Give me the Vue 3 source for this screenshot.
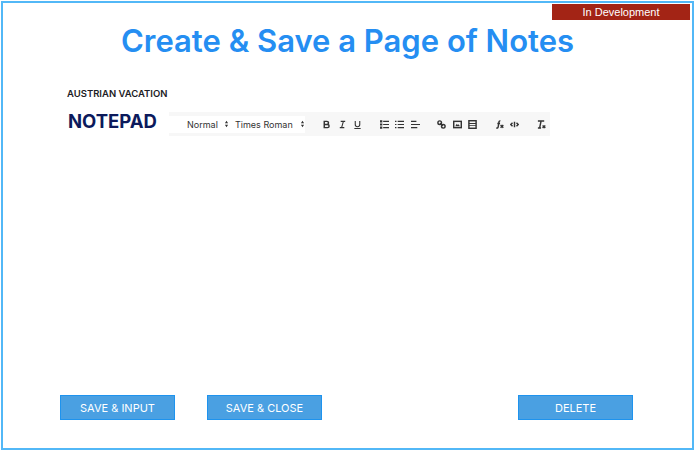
<template>
  <div class="page">
    <div class="badge">In Development</div>
    <h1 class="title">Create &amp; Save a Page of Notes</h1>

    <div class="subject">AUSTRIAN VACATION</div>

    <div class="editor-row">
      <div class="notepad">NOTEPAD</div>
      <div class="toolbar">
        <span class="picker picker-size">Normal<svg class="updown" viewBox="0 0 6 10"><path d="M3 1 5 4H1zM3 9 1 6h4z" /></svg></span>
        <span class="picker picker-font">Times Roman<svg class="updown" viewBox="0 0 6 10"><path d="M3 1 5 4H1zM3 9 1 6h4z" /></svg></span>

        <div class="group">
          <svg class="ico" viewBox="0 0 10 10"><path class="thick" d="M2.500 1.500h3a1.700 1.700 0 0 1 0 3.400h-3zM2.500 4.900h3.600a1.800 1.800 0 0 1 0 3.600H2.500z" /></svg>
          <svg class="ico" viewBox="0 0 10 10"><path d="M3 1.500h5M2 8.500h5M6 1.500 4 8.500" /></svg>
          <svg class="ico" viewBox="0 0 10 10"><path d="M2.500 1v4a2.500 2.500 0 0 0 5 0V1M1.500 9.500h7" /></svg>
        </div>

        <div class="group">
          <svg class="ico" viewBox="0 0 10 10"><path d="M3.500 1.500h6.500M3.500 5h6.500M3.500 8.500h6.500M0 1h2v1.200H0M0 4.400h2v1.200H0M0 7.900h2v1.200H0" /></svg>
          <svg class="ico" viewBox="0 0 10 10"><path d="M3 1.500h7M3 5h7M3 8.500h7M0 1.500h1.600M0 5h1.600M0 8.500h1.600" /></svg>
          <svg class="ico" viewBox="0 0 10 10"><path d="M0 1.500h6M0 5h10M0 8.500h7" /></svg>
        </div>

        <div class="group">
          <svg class="ico" viewBox="0 0 10 10"><circle class="thick" cx="3" cy="3" r="2" /><circle class="thick" cx="7" cy="7" r="2" /><path class="thick" d="M3.500 3.500l3 3" /></svg>
          <svg class="ico" viewBox="0 0 10 10"><rect class="thick" x="0.800" y="1.500" width="8.400" height="7" /><path class="fill" d="M2.500 7 4.200 4.200l1.100 1.400 1-.9L7.600 7z" /></svg>
          <svg class="ico" viewBox="0 0 10 10"><rect class="thick" x="1" y="0.800" width="8" height="8.400" /><path class="fill" d="M1 3.400h8v1H1zM1 5.800h8v1H1z" /></svg>
        </div>

        <div class="group">
          <svg class="ico" viewBox="0 0 10 10"><path class="thick" d="M6 1C4.600.700 4.400 2 4.200 3.400L3.600 7.200C3.400 8.700 2.900 9.300 1.400 8.800M2.600 3.800h3M6.200 5.600l3 3M9.200 5.600l-3 3" /></svg>
          <svg class="ico" viewBox="0 0 10 10"><path class="thick" d="M2.800 3 .8 5l2 2M7.200 3l2 2-2 2M5 2v6" /></svg>
        </div>

        <svg class="ico" viewBox="0 0 10 10"><path class="thick" d="M1 1.200h7M4.500 1.200 3 8.500M1 8.800h3.500M6.200 6l3 3M9.200 6l-3 3" /></svg>
      </div>
    </div>

    <div class="actions">
      <button class="btn">SAVE &amp; INPUT</button>
      <button class="btn">SAVE &amp; CLOSE</button>
      <button class="btn btn-delete">DELETE</button>
    </div>
  </div>
</template>

<script setup>
</script>

<style>
html, body {
  margin: 0;
  background: #fff;
}
</style>

<style scoped>
.page {
  position: relative;
  box-sizing: border-box;
  width: 693px;
  height: 449px;
  margin: 1px 0 0 1px;
  border: 2px solid #52b8f7;
  display: flex;
  flex-direction: column;
  font-family: "Inter", "Noto Sans", sans-serif;
}

.badge {
  position: absolute;
  top: 1px;
  right: 2px;
  width: 138px;
  height: 16px;
  background: #a32415;
  color: #fff;
  font: 11px/16px "Liberation Sans", sans-serif;
  text-align: center;
}

.title {
  margin: 18px 0 0;
  font-size: 31px;
  line-height: 40px;
  font-weight: 600;
  color: #258ef2;
  text-align: center;
}

.subject {
  margin: 27px 0 0 64px;
  font-size: 9.500px;
  line-height: 12px;
  font-weight: 600;
  color: #1c1c24;
}

.editor-row {
  display: flex;
  align-items: flex-end;
  margin: 9px 0 0 65px;
}

.notepad {
  width: 101px;
  margin-bottom: 3px;
  font-size: 18.500px;
  line-height: 24px;
  font-weight: 700;
  color: #0c1a5c;
}

.toolbar {
  width: 381px;
  height: 24px;
  background: #f7f7f7;
  display: flex;
  align-items: center;
  color: #333;
  font-size: 9px;
}

.picker {
  display: flex;
  align-items: center;
  justify-content: space-between;
  box-sizing: border-box;
  height: 17px;
  background: #fff;
}

.picker-size {
  width: 60px;
  padding-left: 18px;
}

.picker-font {
  width: 76px;
  padding: 0 0 0 6px;
  margin-right: 17px;
}

.updown {
  width: 5px;
  height: 8px;
  fill: #333;
}

.group {
  display: flex;
  align-items: center;
  gap: 6.500px;
  margin-right: 17.500px;
}

.ico {
  flex: none;
  width: 9px;
  height: 9px;
  fill: none;
  stroke: #333;
  stroke-width: 1.200;
}

.ico .thick {
  stroke-width: 1.600;
}

.ico .fill {
  fill: #333;
  stroke: none;
}

.actions {
  display: flex;
  margin: auto 0 28px 57px;
}

.btn {
  box-sizing: border-box;
  width: 115px;
  height: 25px;
  margin-right: 32px;
  padding: 1px 0 0;
  background: #4aa0e2;
  border: 1.500px solid #1e93ee;
  border-radius: 0;
  color: #fff;
  font-family: inherit;
  font-size: 11px;
}

.btn-delete {
  margin: 0 0 0 164px;
}
</style>
